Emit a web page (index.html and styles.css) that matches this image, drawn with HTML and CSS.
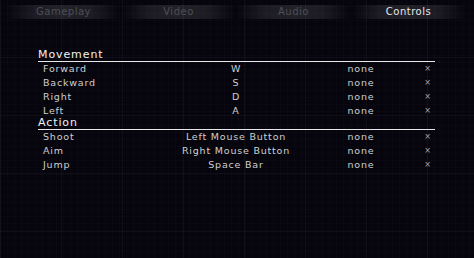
FILE: index.html
```html
<!doctype html>
<html>
<head>
<meta charset="utf-8">
<link rel="stylesheet" href="styles.css">
</head>
<body>
<div class="tabs">
	<div class="tab">Gameplay</div>
	<div class="tab">Video</div>
	<div class="tab">Audio</div>
	<div class="tab active">Controls</div>
</div>

<div class="binds">
	<div class="section">
		<div class="head">Movement</div>
		<div class="row"><span>Forward</span><span class="key">W</span><span class="alt">none</span><span class="clear">×</span></div>
		<div class="row"><span>Backward</span><span class="key">S</span><span class="alt">none</span><span class="clear">×</span></div>
		<div class="row"><span>Right</span><span class="key">D</span><span class="alt">none</span><span class="clear">×</span></div>
		<div class="row"><span>Left</span><span class="key">A</span><span class="alt">none</span><span class="clear">×</span></div>
	</div>
	<div class="section">
		<div class="head">Action</div>
		<div class="row"><span>Shoot</span><span class="key">Left Mouse Button</span><span class="alt">none</span><span class="clear">×</span></div>
		<div class="row"><span>Aim</span><span class="key">Right Mouse Button</span><span class="alt">none</span><span class="clear">×</span></div>
		<div class="row"><span>Jump</span><span class="key">Space Bar</span><span class="alt">none</span><span class="clear">×</span></div>
	</div>
</div>
</body>
</html>
```

FILE: styles.css
```css
body{
	margin:0;
	width:474px;
	height:258px;
	overflow:hidden;
	font-family:"DejaVu Sans",sans-serif;
	background-color:#06050d;
	background-image:
		linear-gradient(90deg,rgba(120,120,150,0.08) 1px,transparent 1px),
		linear-gradient(0deg,rgba(120,120,150,0.08) 1px,transparent 1px),
		linear-gradient(90deg,rgba(120,120,150,0.03) 1px,transparent 1px),
		linear-gradient(0deg,rgba(120,120,150,0.03) 1px,transparent 1px);
	background-size:61px 58px,61px 58px,7px 7px,7px 7px;
	background-position:0 0,0 0,0 0,0 0;
}
.tabs{
	display:flex;
	padding:5px 8px 0 6px;
}
.tab{
	flex:1;
	height:14px;
	line-height:14px;
	text-align:center;
	font-size:10px;
	letter-spacing:0.5px;
	color:#4e4e56;
	background:linear-gradient(90deg,rgba(255,255,255,0) 0%,rgba(255,255,255,0.09) 25%,rgba(255,255,255,0.11) 50%,rgba(255,255,255,0.09) 75%,rgba(255,255,255,0) 100%);
}
.tab.active{
	color:#e6e6e6;
}
.binds{
	width:397px;
	margin:32px 0 0 38px;
}
.head{
	height:10px;
	line-height:9px;
	font-size:11px;
	letter-spacing:0.9px;
	color:#f2f2f2;
	border-bottom:1px solid #e8e8e8;
	padding-bottom:1px;
}
.section:first-child .head{
	margin-top:-1px;
}
.row{
	display:grid;
	grid-template-columns:112px 172px 78px 35px;
	height:14px;
	line-height:14px;
	font-size:9.5px;
	letter-spacing:0.8px;
	color:#cfcfcf;
}
.row span:first-child{
	padding-left:5px;
}
.key{
	text-align:center;
}
.alt{
	text-align:center;
}
.clear{
	text-align:right;
	padding-right:4px;
	font-size:8px;
	letter-spacing:0;
	color:#a8a8a8;
}
```
